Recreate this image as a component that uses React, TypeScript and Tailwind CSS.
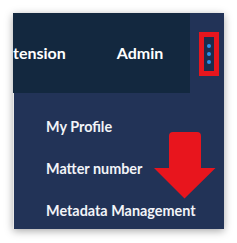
export default function App() {
  const items = ["My Profile", "Matter number", "Metadata Management"];

  return (
    <div className="w-[237px] h-[243px] bg-white pt-[13px] pl-[13px]">
      <div className="relative w-[211px] h-[216px] bg-[#223357] shadow-[0_2px_8px_rgba(0,0,0,0.35)] overflow-hidden flex flex-col font-['Lato',sans-serif]">
        {/* top nav */}
        <div className="flex h-[80px] shrink-0">
          <div className="w-[177px] bg-[#13283f] flex items-center text-[16px] font-bold text-white whitespace-nowrap">
            <span>tension</span>
            <span className="ml-[51px]">Admin</span>
          </div>
          <div className="flex-1 flex pt-[19px] pl-[9px]">
            <div className="w-[20px] h-[44px] border-[5px] border-[#e6161e] bg-[#1a2d4c] flex flex-col items-center justify-center gap-[4px]">
              <span className="w-[4px] h-[4px] rounded-full bg-[#2c90ea]" />
              <span className="w-[4px] h-[4px] rounded-full bg-[#2c90ea]" />
              <span className="w-[4px] h-[4px] rounded-full bg-[#2c90ea]" />
            </div>
          </div>
        </div>

        {/* dropdown */}
        <div className="flex-1 border-l border-[#e8e8e8] pl-[32px] pt-[25px] flex flex-col gap-[24px] text-[14.4px] font-bold text-[#f2f4f8] leading-[18px]">
          {items.map((label) => (
            <div key={label} className="whitespace-nowrap">
              {label}
            </div>
          ))}
        </div>

        {/* arrow */}
        <svg
          className="absolute left-[141px] top-[119px]"
          width="62"
          height="67"
          viewBox="0 0 62 67"
        >
          <path
            d="M19 0 H43 Q47 0 47 4 V36 H61.5 L30.5 66.5 L0 36 H15 V4 Q15 0 19 0 Z"
            fill="#e8151d"
          />
        </svg>
      </div>
    </div>
  );
}
